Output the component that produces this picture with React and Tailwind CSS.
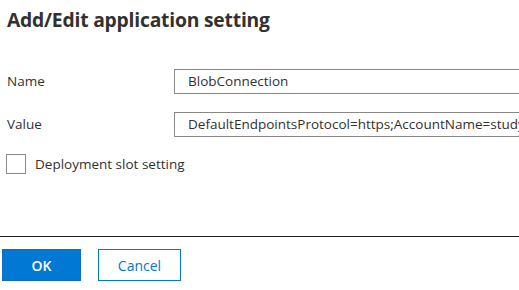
export default function App() {
  return (
    <div className="w-[519px] h-[290px] overflow-hidden bg-white text-[#323130] font-['Segoe_UI','Open_Sans',sans-serif]">
      <h1 className="pl-[7px] pt-[7px] text-[19.3px] leading-[26px] font-bold tracking-[-0.2px]">
        Add/Edit application setting
      </h1>

      <div className="mt-[36px] flex flex-col gap-[18px]">
        <div className="flex items-center h-[25px]">
          <label className="w-[174px] pl-[7px] text-[13.5px]">Name</label>
          <div className="flex-1 h-[25px] border border-[#8a8886] border-r-0 pl-[13px] flex items-center text-[13.5px] whitespace-nowrap overflow-hidden">
            BlobConnection
          </div>
        </div>
        <div className="flex items-center h-[25px]">
          <label className="w-[174px] pl-[7px] text-[13.5px]">Value</label>
          <div className="flex-1 h-[25px] border border-[#8a8886] border-r-0 pl-[13px] flex items-center text-[13.5px] whitespace-nowrap overflow-hidden">
            DefaultEndpointsProtocol=https;AccountName=study
          </div>
        </div>
      </div>

      <div className="mt-[17px] flex items-center pl-[6px]">
        <span className="w-[20px] h-[20px] border border-[#8a8886] bg-white" />
        <span className="ml-[9px] text-[13.5px]">Deployment slot setting</span>
      </div>

      <div className="mt-[62px] h-[1px] bg-[#201f1e]" />

      <div className="mt-[12px] flex gap-[17px] pl-[2px]">
        <button className="w-[79px] h-[32px] bg-[#0078d4] border border-[#106ebe] text-white text-[14px] font-semibold">
          OK
        </button>
        <button className="w-[83px] h-[32px] bg-white border border-[#0078d4] text-[#0078d4] text-[14px]">
          Cancel
        </button>
      </div>
    </div>
  );
}
